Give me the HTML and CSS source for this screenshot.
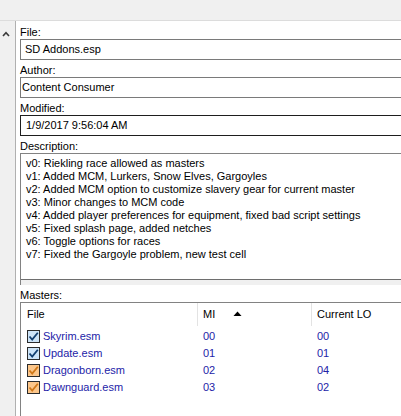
FILE: index.html
```html
<!DOCTYPE html>
<html>
<head>
<meta charset="utf-8">
<link rel="stylesheet" href="styles.css">
</head>
<body>
<div class="top"></div>
<div class="wrap">
  <div class="side">
    <svg class="chev" width="8" height="6" viewBox="0 0 8 6"><path d="M1 5 L4 1.6 L7 5" fill="none" stroke="#3a3a3a" stroke-width="1.6"/></svg>
  </div>
  <div class="main">
    <div class="label first">File:</div>
    <div class="field f-file">SD Addons.esp</div>
    <div class="label">Author:</div>
    <div class="field f-author">Content Consumer</div>
    <div class="label">Modified:</div>
    <div class="field f-mod">1/9/2017 9:56:04 AM</div>
    <div class="label">Description:</div>
    <div class="desc">
      <div class="desc-text">
        <div>v0: Riekling race allowed as masters</div>
        <div>v1: Added MCM, Lurkers, Snow Elves, Gargoyles</div>
        <div>v2: Added MCM option to customize slavery gear for current master</div>
        <div>v3: Minor changes to MCM code</div>
        <div>v4: Added player preferences for equipment, fixed bad script settings</div>
        <div>v5: Fixed splash page, added netches</div>
        <div>v6: Toggle options for races</div>
        <div>v7: Fixed the Gargoyle problem, new test cell</div>
      </div>
      <div class="desc-strip"></div>
    </div>
    <div class="label">Masters:</div>
    <div class="list">
      <div class="row head">
        <div class="c1">File</div>
        <div class="c2 sep">MI<svg class="sort" width="9" height="5" viewBox="0 0 9 5"><path d="M0.5 5 L4.5 0.5 L8.5 5 Z" fill="#000"/></svg></div>
        <div class="c3 sep">Current LO</div>
      </div>
      <div class="row item">
        <div class="c1"><span class="cb blue"><svg width="11" height="11" viewBox="0 0 11 11"><path d="M1.5 5.5 L4.2 8.6 L9.8 1.8" fill="none" stroke="#123f70" stroke-width="1.8"/></svg></span>Skyrim.esm</div>
        <div class="c2">00</div>
        <div class="c3">00</div>
      </div>
      <div class="row item">
        <div class="c1"><span class="cb blue"><svg width="11" height="11" viewBox="0 0 11 11"><path d="M1.5 5.5 L4.2 8.6 L9.8 1.8" fill="none" stroke="#123f70" stroke-width="1.8"/></svg></span>Update.esm</div>
        <div class="c2">01</div>
        <div class="c3">01</div>
      </div>
      <div class="row item">
        <div class="c1"><span class="cb orange"><svg width="11" height="11" viewBox="0 0 11 11"><path d="M1.5 5.5 L4.2 8.6 L9.8 1.8" fill="none" stroke="#d07818" stroke-width="1.8"/></svg></span>Dragonborn.esm</div>
        <div class="c2">02</div>
        <div class="c3">04</div>
      </div>
      <div class="row item">
        <div class="c1"><span class="cb orange"><svg width="11" height="11" viewBox="0 0 11 11"><path d="M1.5 5.5 L4.2 8.6 L9.8 1.8" fill="none" stroke="#d07818" stroke-width="1.8"/></svg></span>Dawnguard.esm</div>
        <div class="c2">03</div>
        <div class="c3">02</div>
      </div>
    </div>
  </div>
</div>
</body>
</html>
```
FILE: styles.css
```css
html, body {
  margin: 0;
  padding: 0;
  width: 401px;
  height: 416px;
  overflow: hidden;
  background: #ffffff;
  font-family: "Liberation Sans", Arial, sans-serif;
  font-size: 11px;
  color: #000;
}

.top {
  height: 20px;
  background: #f0f0f0;
  border-bottom: 1px solid #dcdcdc;
}

.wrap {
  display: flex;
  height: 395px;
}

.side {
  width: 15px;
  flex: none;
  background: #f0f0f0;
  border-right: 1px solid #b0b0b0;
  display: flex;
  flex-direction: column;
}

.chev {
  display: block;
  margin: 10px 0 0 2px;
}

.main {
  flex: 1;
  padding-left: 4px;
  min-width: 0;
  display: flex;
  flex-direction: column;
}

.label {
  height: 13px;
  line-height: 13px;
  margin-top: 4px;
  white-space: nowrap;
}

.label.first {
  margin-top: 5px;
}

.field {
  height: 21px;
  box-sizing: border-box;
  line-height: 19px;
  border: 1px solid #7a7a7a;
  margin-right: -20px;
  white-space: nowrap;
}

.f-file { padding-left: 4px; }
.f-author { padding-left: 1px; }
.f-mod { padding-left: 5px; border-color: #1e1e1e; }

.desc {
  border: 1px solid #828282;
  border-bottom: none;
  margin-right: -20px;
}

.desc-text {
  height: 126px;
  box-sizing: border-box;
  padding: 3px 0 0 5px;
  line-height: 13px;
  white-space: nowrap;
  border-bottom: 1px solid #6e6e6e;
}

.desc-strip {
  height: 5px;
  background: #f0f0f0;
}

.list {
  flex: 1;
  border: 1px solid #828282;
  border-bottom: none;
  margin-right: -20px;
}

.row {
  display: grid;
  grid-template-columns: 176px 114px 1fr;
  white-space: nowrap;
}

.row.head {
  height: 23px;
  line-height: 23px;
  margin-bottom: 2px;
}

.row.item {
  height: 17px;
  line-height: 17px;
  color: #2323a8;
}

.c1 {
  padding-left: 6px;
  display: flex;
  align-items: center;
}

.c2, .c3 {
  padding-left: 5px;
}

.sep {
  border-left: 1px solid #e3e3e3;
}

.head .c2, .head .c3 {
  padding-left: 5px;
}

.item .c2, .item .c3 {
  padding-left: 6px;
}

.head .c2 {
  display: flex;
  align-items: center;
}

.sort {
  display: block;
  margin-left: 18px;
  margin-top: -2px;
}

.cb {
  width: 13px;
  height: 13px;
  box-sizing: border-box;
  border: 1px solid #2b2b2b;
  margin-right: 3px;
  display: flex;
  align-items: center;
  justify-content: center;
  flex: none;
}

.cb svg { display: block; }

.cb.blue { background: #cde4f8; }
.cb.orange { background: #fcc68a; }
```
